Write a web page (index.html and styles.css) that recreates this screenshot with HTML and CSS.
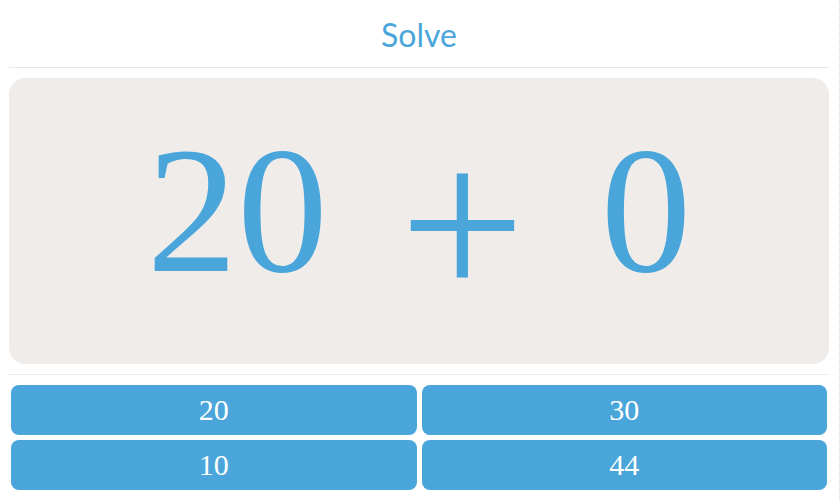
FILE: index.html
```
<!DOCTYPE html>
<html lang="en">
<head>
<meta charset="utf-8">
<title>Solve</title>
<link rel="stylesheet" href="styles.css">
</head>
<body>
<div class="app">
  <header class="header"><h1 class="title">Solve</h1></header>
  <section class="card">
    <div class="problem"><span class="operand">20</span><span class="operator">+</span><span class="operand">0</span></div>
  </section>
  <hr class="divider">
  <div class="answers">
    <button class="answer">20</button>
    <button class="answer">30</button>
    <button class="answer">10</button>
    <button class="answer">44</button>
  </div>
</div>
</body>
</html>
```
FILE: styles.css
```
html {
  border-right: 1px dotted #d4d4d4;
  min-height: 100%;
  box-sizing: border-box;
}
body {
  margin: 0;
  background: #ffffff;
  font-family: "Liberation Serif", "Times New Roman", serif;
}
.app {
  width: 820px;
  margin-left: 9px;
}
.header {
  height: 67px;
  border-bottom: 1px solid #e8e8e8;
  display: flex;
  align-items: center;
  justify-content: center;
}
.title {
  margin: 0;
  padding-top: 3px;
  font-family: Lato, "Open Sans", sans-serif;
  font-weight: 400;
  font-size: 32px;
  color: #4aa6da;
  line-height: 1;
}
.card {
  margin-top: 10px;
  height: 286px;
  background: #f0ecea;
  border-radius: 16px;
  display: flex;
  align-items: center;
  justify-content: center;
}
.problem {
  font-family: "Liberation Serif", "Times New Roman", serif;
  color: #4aa6da;
  line-height: 1;
  white-space: nowrap;
  padding-top: 6px;
}
.operand {
  font-size: 181px;
}
.operator {
  font-size: 222px;
  margin: 0 76px 0 72px;
  vertical-align: -28px;
}
.divider {
  margin: 10px 0 0;
  border: 0;
  border-top: 1px solid #ececec;
  height: 0;
}
.answers {
  margin-top: 10px;
  padding: 0 2px;
  display: grid;
  grid-template-columns: 1fr 1fr;
  grid-auto-rows: 50px;
  gap: 5px;
}
.answer {
  border: 0;
  border-radius: 8px;
  background: #4aa6da;
  color: #ffffff;
  font-family: "Liberation Serif", "Times New Roman", serif;
  font-size: 30px;
  padding: 0;
}
```
